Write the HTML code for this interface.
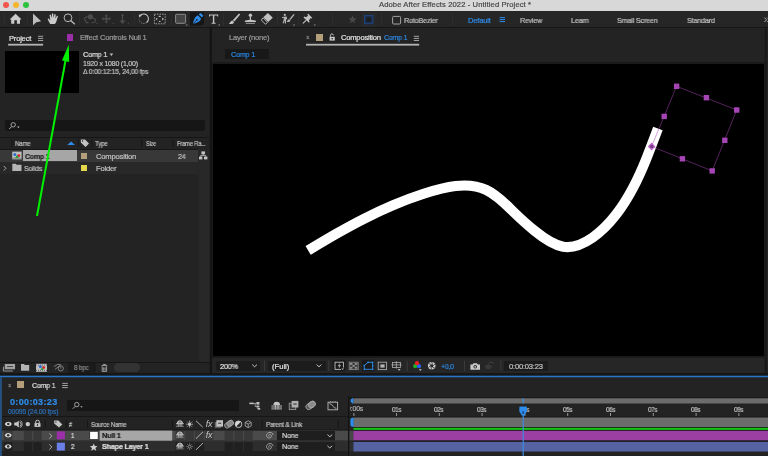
<!DOCTYPE html>
<html><head><meta charset="utf-8"><title>Adobe After Effects 2022 - Untitled Project *</title>
<style>
html,body{margin:0;padding:0;background:#161616;}
body{width:768px;height:456px;position:relative;overflow:hidden;font-family:"Liberation Sans",sans-serif;color:#b4b4b4;font-size:7.6px;}
.a{position:absolute;}
.t{position:absolute;white-space:pre;line-height:10px;height:10px;will-change:transform;-webkit-text-stroke:0.2px currentColor;}
svg{position:absolute;left:0;top:0;overflow:visible;}
</style></head><body>
<!-- ===== title bar ===== -->
<div class="a" style="left:0;top:0;width:768px;height:11px;background:#d8d8d8;"></div>
<div class="a" style="left:3px;top:2px;width:6px;height:6px;border-radius:50%;background:#f2554d;"></div>
<div class="a" style="left:13px;top:2px;width:6px;height:6px;border-radius:50%;background:#f6b52e;"></div>
<div class="a" style="left:23px;top:2px;width:6px;height:6px;border-radius:50%;background:#2bc23c;"></div>
<!-- ===== toolbar ===== -->
<div class="a" style="left:0;top:11px;width:768px;height:16px;background:#262626;"></div>
<!-- ===== project panel ===== -->
<div class="a" style="left:0;top:28px;width:210px;height:345px;background:#232323;"></div>
<div class="a" style="left:66.5px;top:34px;width:6.6px;height:6.6px;background:#9b2fa8;"></div>
<div class="a" style="left:5px;top:51px;width:74px;height:42px;background:#000;"></div>
<div class="a" style="left:5px;top:120px;width:200px;height:11px;background:#161616;border-radius:2px;"></div>
<div class="a" style="left:0;top:137px;width:209px;height:1px;background:#161616;"></div>
<div class="a" style="left:0;top:149px;width:198px;height:1px;background:#161616;"></div>
<div class="a" style="left:0;top:150px;width:198px;height:12px;background:#383838;"></div>
<div class="a" style="left:0;top:162px;width:198px;height:12px;background:#282828;"></div>
<div class="a" style="left:23px;top:150px;width:54px;height:11px;background:#a6a6a6;"></div>
<div class="a" style="left:81.2px;top:152.7px;width:6.3px;height:6.3px;background:#b39f7a;"></div>
<div class="a" style="left:81.2px;top:165.1px;width:6.3px;height:6.3px;background:#e4d84a;"></div>
<div class="a" style="left:0;top:362px;width:209px;height:1px;background:#161616;"></div>
<div class="a" style="left:68px;top:363px;width:28px;height:10px;background:#1b1b1b;"></div>
<div class="a" style="left:114px;top:363px;width:26px;height:9px;background:#333;border-radius:5px;"></div>
<!-- ===== comp panel ===== -->
<div class="a" style="left:212px;top:28px;width:556px;height:345px;background:#232323;"></div>
<div class="a" style="left:316px;top:34px;width:7px;height:7px;background:#b39f7a;"></div>
<div class="a" style="left:225px;top:49px;width:44px;height:10px;background:#181818;"></div>
<div class="a" style="left:212px;top:62px;width:554px;height:296px;background:#1a1a1a;"></div>
<div class="a" style="left:213px;top:64px;width:551px;height:292px;background:#000;"></div>
<!-- viewer footer -->
<div class="a" style="left:212px;top:358px;width:552px;height:15px;background:#262626;"></div>
<div class="a" style="left:216px;top:361px;width:44px;height:10px;background:#1c1c1c;"></div>
<div class="a" style="left:268px;top:361px;width:58px;height:10px;background:#1c1c1c;"></div>
<div class="a" style="left:504px;top:361px;width:44px;height:10px;background:#1c1c1c;"></div>
<!-- ===== timeline panel ===== -->
<div class="a" style="left:0;top:377px;width:768px;height:79px;background:#232323;"></div>
<div class="a" style="left:17px;top:381px;width:7px;height:7px;background:#b39f7a;"></div>
<div class="a" style="left:67px;top:400px;width:172px;height:11px;background:#161616;"></div>
<div class="a" style="left:2px;top:416px;width:347px;height:1px;background:#161616;"></div>
<!-- rows -->
<svg width="768" height="456" viewBox="0 0 768 456">
<rect x="1.9" y="429.4" width="346.2" height="1.2" fill="#1a1a1a"/>
<rect x="1.9" y="430.6" width="346.2" height="10" fill="#4a4a4a"/>
<rect x="1.9" y="440.6" width="346.2" height="1.2" fill="#363636"/>
<rect x="1.9" y="441.8" width="346.2" height="9.4" fill="#2d2d2d"/>
<rect x="1.9" y="451.2" width="346.2" height="4.8" fill="#202020"/>
<rect x="99.7" y="430.6" width="72.5" height="10.1" fill="#a6a6a6"/>
<rect x="56.8" y="431.4" width="8.1" height="7.9" fill="#9b2fa8"/>
<rect x="56.8" y="442.7" width="8.1" height="7.9" fill="#6b7fe8"/>
<rect x="89.6" y="431.3" width="8.7" height="8.3" fill="#262626"/>
<rect x="90.1" y="431.8" width="7.7" height="7.3" fill="#fff"/>
<rect x="277" y="431" width="58" height="9.4" fill="#1e1e1e"/>
<rect x="277" y="442.2" width="58" height="9" fill="#1e1e1e"/>
</svg>
<!-- time graph -->
<svg width="768" height="456" viewBox="0 0 768 456">
<rect x="349.2" y="430.8" width="4.4" height="9.7" fill="#484848"/>
<rect x="349.2" y="441.9" width="4.4" height="9.4" fill="#2e2e2e"/>
<rect x="348.1" y="396" width="1.1" height="60" fill="#111"/>
<rect x="349.2" y="397.3" width="418.8" height="1" fill="#161616"/>
<rect x="353.4" y="398.3" width="414.6" height="5.2" fill="#6c6c6c"/>
<rect x="349.2" y="416.6" width="418.8" height="1" fill="#141414"/>
<rect x="353.4" y="417.5" width="414.6" height="9.5" fill="#6c6c6c"/>
<rect x="353.4" y="427" width="414.6" height="3.8" fill="#161616"/>
<rect x="353.4" y="427.8" width="414.6" height="2.1" fill="#18c418"/>
<rect x="353.4" y="430.8" width="414.6" height="9.7" fill="#9c3fa3"/>
<rect x="353.4" y="440.5" width="414.6" height="1.4" fill="#1c1c1c"/>
<rect x="353.4" y="441.9" width="414.6" height="9.6" fill="#5563a2"/>
</svg>
<div class="a" style="left:349.5px;top:401px;width:13.5px;height:14px;overflow:hidden;"><div class="t" style="left:-3px;top:3.2px;font-size:6.8px;color:#b4b4b4;letter-spacing:-0.1px;">0:00s</div></div>
<div class="t" style="left:378.9px;top:-0.2px;font-size:7.6px;color:#464646;letter-spacing:0.11px;">Adobe After Effects 2022 - Untitled Project *</div>
<div class="t" style="left:403.6px;top:15.8px;font-size:7.6px;color:#c2c2c2;letter-spacing:-0.22px;transform:scaleX(0.952);transform-origin:0 50%;">RotoBezier</div>
<div class="t" style="left:468.0px;top:15.8px;font-size:7.6px;color:#2d8ceb;letter-spacing:-0.18px;">Default</div>
<div class="t" style="left:519.7px;top:15.8px;font-size:7.6px;color:#c2c2c2;letter-spacing:-0.22px;transform:scaleX(0.937);transform-origin:0 50%;">Review</div>
<div class="t" style="left:570.5px;top:15.8px;font-size:7.6px;color:#c2c2c2;letter-spacing:-0.22px;transform:scaleX(0.970);transform-origin:0 50%;">Learn</div>
<div class="t" style="left:617.2px;top:15.8px;font-size:7.6px;color:#c2c2c2;letter-spacing:-0.22px;transform:scaleX(0.954);transform-origin:0 50%;">Small Screen</div>
<div class="t" style="left:687.2px;top:15.8px;font-size:7.6px;color:#c2c2c2;letter-spacing:-0.22px;transform:scaleX(0.956);transform-origin:0 50%;">Standard</div>
<div class="t" style="left:8.5px;top:33.8px;font-size:7.6px;color:#e2e2e2;letter-spacing:-0.22px;">Project</div>
<div class="t" style="left:79.8px;top:32.8px;font-size:7.6px;color:#9a9a9a;letter-spacing:-0.21px;">Effect Controls Null 1</div>
<div class="t" style="left:82.5px;top:49.8px;font-size:7.6px;color:#e2e2e2;letter-spacing:-0.22px;transform:scaleX(0.961);transform-origin:0 50%;">Comp 1</div>
<div class="t" style="left:82.5px;top:58.8px;font-size:7px;color:#c2c2c2;letter-spacing:-0.22px;">1920 x 1080 (1,00)</div>
<div class="t" style="left:82.5px;top:66.8px;font-size:7px;color:#c2c2c2;letter-spacing:-0.22px;transform:scaleX(0.974);transform-origin:0 50%;">Δ 0:00:12:15, 24,00 fps</div>
<div class="t" style="left:229.0px;top:32.8px;font-size:7.6px;color:#9a9a9a;letter-spacing:-0.22px;">Layer (none)</div>
<div class="t" style="left:305.7px;top:32.8px;font-size:7.6px;color:#9a9a9a;letter-spacing:-0.22px;transform:scaleX(0.811);transform-origin:0 50%;">×</div>
<div class="t" style="left:341.0px;top:32.8px;font-size:7.6px;color:#e2e2e2;letter-spacing:-0.22px;">Composition</div>
<div class="t" style="left:383.5px;top:32.8px;font-size:7.6px;color:#2d8ceb;letter-spacing:-0.22px;transform:scaleX(0.922);transform-origin:0 50%;">Comp 1</div>
<div class="t" style="left:230.7px;top:49.8px;font-size:7.6px;color:#2d8ceb;letter-spacing:-0.22px;transform:scaleX(0.953);transform-origin:0 50%;">Comp 1</div>
<div class="t" style="left:14.9px;top:138.8px;font-size:7px;color:#c2c2c2;letter-spacing:-0.22px;transform:scaleX(0.876);transform-origin:0 50%;">Name</div>
<div class="t" style="left:95.1px;top:138.8px;font-size:7px;color:#c2c2c2;letter-spacing:-0.22px;transform:scaleX(0.888);transform-origin:0 50%;">Type</div>
<div class="t" style="left:145.6px;top:138.8px;font-size:7px;color:#c2c2c2;letter-spacing:-0.22px;transform:scaleX(0.787);transform-origin:0 50%;">Size</div>
<div class="t" style="left:176.9px;top:138.8px;font-size:7px;color:#c2c2c2;letter-spacing:-0.22px;transform:scaleX(0.829);transform-origin:0 50%;">Frame Ra...</div>
<div class="t" style="left:24.5px;top:151.8px;font-size:7.6px;color:#1c1c1c;letter-spacing:-0.22px;transform:scaleX(0.916);transform-origin:0 50%;font-weight:bold;">Comp 1</div>
<div class="t" style="left:95.9px;top:151.8px;font-size:7.6px;color:#c2c2c2;letter-spacing:-0.19px;">Composition</div>
<div class="t" style="left:177.6px;top:151.8px;font-size:7.6px;color:#c2c2c2;letter-spacing:-0.22px;transform:scaleX(0.935);transform-origin:0 50%;">24</div>
<div class="t" style="left:24.2px;top:163.8px;font-size:7.6px;color:#c2c2c2;letter-spacing:-0.22px;transform:scaleX(0.939);transform-origin:0 50%;">Solids</div>
<div class="t" style="left:95.9px;top:163.8px;font-size:7.6px;color:#c2c2c2;letter-spacing:-0.22px;">Folder</div>
<div class="t" style="left:74.2px;top:362.8px;font-size:6.6px;color:#8a8a8a;letter-spacing:-0.22px;transform:scaleX(0.963);transform-origin:0 50%;">8 bpc</div>
<div class="t" style="left:219.9px;top:361.8px;font-size:7.6px;color:#e2e2e2;letter-spacing:-0.22px;transform:scaleX(0.964);transform-origin:0 50%;">200%</div>
<div class="t" style="left:272.0px;top:361.8px;font-size:7.6px;color:#e2e2e2;letter-spacing:0.00px;">(Full)</div>
<div class="t" style="left:440.9px;top:361.8px;font-size:7.6px;color:#2d8ceb;letter-spacing:-0.22px;transform:scaleX(0.914);transform-origin:0 50%;">+0,0</div>
<div class="t" style="left:509.0px;top:361.8px;font-size:7.6px;color:#c2c2c2;letter-spacing:-0.22px;">0:00:03:23</div>
<div class="t" style="left:8.0px;top:380.8px;font-size:7.6px;color:#9a9a9a;letter-spacing:-0.22px;transform:scaleX(0.766);transform-origin:0 50%;">×</div>
<div class="t" style="left:31.9px;top:380.8px;font-size:7.6px;color:#e2e2e2;letter-spacing:-0.22px;transform:scaleX(0.930);transform-origin:0 50%;">Comp 1</div>
<div class="t" style="left:9.8px;top:397.2px;font-size:9px;color:#2d8ceb;letter-spacing:0.35px;font-weight:bold;">0:00:03:23</div>
<div class="t" style="left:8.1px;top:406.8px;font-size:6.8px;color:#2a6db5;letter-spacing:-0.18px;">00095 (24.00 fps)</div>
<div class="t" style="left:69.0px;top:419.8px;font-size:6.5px;color:#c2c2c2;letter-spacing:-0.22px;transform:scaleX(0.828);transform-origin:0 50%;">#</div>
<div class="t" style="left:91.2px;top:419.8px;font-size:7px;color:#c2c2c2;letter-spacing:-0.22px;transform:scaleX(0.878);transform-origin:0 50%;">Source Name</div>
<div class="t" style="left:265.8px;top:419.8px;font-size:7px;color:#c2c2c2;letter-spacing:-0.22px;transform:scaleX(0.920);transform-origin:0 50%;">Parent &amp; Link</div>
<div class="t" style="left:71.0px;top:430.8px;font-size:7.6px;color:#e2e2e2;letter-spacing:-0.22px;transform:scaleX(0.803);transform-origin:0 50%;">1</div>
<div class="t" style="left:71.0px;top:441.8px;font-size:7.6px;color:#e2e2e2;letter-spacing:-0.22px;transform:scaleX(0.850);transform-origin:0 50%;">2</div>
<div class="t" style="left:102.2px;top:430.8px;font-size:7.6px;color:#1c1c1c;letter-spacing:-0.22px;transform:scaleX(0.970);transform-origin:0 50%;font-weight:bold;">Null 1</div>
<div class="t" style="left:101.9px;top:441.8px;font-size:7.6px;color:#e2e2e2;letter-spacing:-0.22px;transform:scaleX(0.954);transform-origin:0 50%;font-weight:bold;">Shape Layer 1</div>
<div class="t" style="left:281.6px;top:430.8px;font-size:7.6px;color:#dcdcdc;letter-spacing:-0.22px;transform:scaleX(0.952);transform-origin:0 50%;">None</div>
<div class="t" style="left:281.6px;top:441.8px;font-size:7.6px;color:#dcdcdc;letter-spacing:-0.22px;transform:scaleX(0.952);transform-origin:0 50%;">None</div>
<div class="t" style="left:391.5px;top:404.8px;font-size:6.8px;color:#c2c2c2;letter-spacing:-0.22px;transform:scaleX(0.912);transform-origin:0 50%;">01s</div>
<div class="t" style="left:434.3px;top:404.8px;font-size:6.8px;color:#c2c2c2;letter-spacing:-0.22px;transform:scaleX(0.912);transform-origin:0 50%;">02s</div>
<div class="t" style="left:477.1px;top:404.8px;font-size:6.8px;color:#c2c2c2;letter-spacing:-0.22px;transform:scaleX(0.912);transform-origin:0 50%;">03s</div>
<div class="t" style="left:519.9px;top:404.8px;font-size:6.8px;color:#c2c2c2;letter-spacing:-0.22px;transform:scaleX(0.912);transform-origin:0 50%;">04s</div>
<div class="t" style="left:562.7px;top:404.8px;font-size:6.8px;color:#c2c2c2;letter-spacing:-0.22px;transform:scaleX(0.912);transform-origin:0 50%;">05s</div>
<div class="t" style="left:605.5px;top:404.8px;font-size:6.8px;color:#c2c2c2;letter-spacing:-0.22px;transform:scaleX(0.912);transform-origin:0 50%;">06s</div>
<div class="t" style="left:648.3px;top:404.8px;font-size:6.8px;color:#c2c2c2;letter-spacing:-0.22px;transform:scaleX(0.912);transform-origin:0 50%;">07s</div>
<div class="t" style="left:691.1px;top:404.8px;font-size:6.8px;color:#c2c2c2;letter-spacing:-0.22px;transform:scaleX(0.912);transform-origin:0 50%;">08s</div>
<div class="t" style="left:733.9px;top:404.8px;font-size:6.8px;color:#c2c2c2;letter-spacing:-0.22px;transform:scaleX(0.912);transform-origin:0 50%;">09s</div>
<svg width="768" height="456" viewBox="0 0 768 456">
<rect x="764.6" y="28.4" width="2.2" height="344.8" fill="#191919"/>
<!-- lock -->
<rect x="329.6" y="36.8" width="5.2" height="3.8" fill="#c8c8c8"/>
<path d="M330.4 36.8 v-1.4 a1.5 1.5 0 0 1 3 0" fill="none" stroke="#c8c8c8" stroke-width="0.9"/>
<rect x="331.6" y="38" width="1.2" height="1.4" fill="#232323"/>
<!-- comp tab menu -->
<path d="M413.8 36.3 h5.2 M413.8 38.4 h5.2 M413.8 40.5 h5.2" stroke="#b0b0b0" stroke-width="0.9"/>
<rect x="306" y="43.8" width="113.2" height="1.8" fill="#b4b4b4"/>
</svg>
<svg width="768" height="456" viewBox="0 0 768 456">
<path d="M264.5 360.5V371M328.7 360.5V371M407.2 360.5V371M464.5 360.5V371M500.8 360.5V371" stroke="#3a3a3a" stroke-width="1"/>
<!-- dropdown chevrons -->
<path d="M252.2 364.6 l2.4 2.2 l2.4 -2.2 M316.6 364.6 l2.4 2.2 l2.4 -2.2" fill="none" stroke="#c4c4c4" stroke-width="1"/>
<!-- fast preview -->
<rect x="332.6" y="359.8" width="13" height="11.5" fill="#1a1a1a"/>
<rect x="335" y="362.2" width="8.4" height="7.2" fill="none" stroke="#c0c0c0" stroke-width="0.9"/>
<path d="M340 362.8 L337.8 366.2 H339.4 L338.6 368.8 L341 365.2 H339.4 Z" fill="#c0c0c0"/>
<rect x="341" y="367.6" width="3.4" height="2.8" fill="#1a1a1a"/>
<path d="M341.4 368.4 h2.6 l-1.3 1.5 z" fill="#c0c0c0"/>
<!-- transparency grid -->
<rect x="349.2" y="362.2" width="9" height="7.4" fill="#3a3a3a" stroke="#8c8c8c" stroke-width="0.8"/>
<g fill="#8c8c8c"><rect x="350" y="363" width="2.4" height="1.9"/><rect x="354.8" y="363" width="2.4" height="1.9"/><rect x="352.4" y="364.9" width="2.4" height="1.9"/><rect x="350" y="366.8" width="2.4" height="1.9"/><rect x="354.8" y="366.8" width="2.4" height="1.9"/></g>
<!-- mask toggle -->
<rect x="362.1" y="359.8" width="12" height="11.5" fill="#1a1a1a"/>
<path d="M364.2 365.6 L368 362.3 L372.6 362.3 L372.6 369.3 L364.4 369.3 Z" fill="none" stroke="#2d8ceb" stroke-width="0.9"/>
<g fill="#2d8ceb"><rect x="363.5" y="364.8" width="1.5" height="1.5"/><rect x="367.3" y="361.6" width="1.5" height="1.5"/><rect x="371.9" y="361.6" width="1.5" height="1.5"/><rect x="371.9" y="365" width="1.5" height="1.5"/><rect x="371.9" y="368.6" width="1.5" height="1.5"/><rect x="363.6" y="368.6" width="1.5" height="1.5"/></g>
<!-- region of interest -->
<rect x="378.2" y="362.2" width="8.4" height="7.4" fill="none" stroke="#a8a8a8" stroke-width="0.9"/>
<rect x="380.4" y="364.4" width="4.2" height="3.2" fill="#b4b4b4"/>
<!-- grid & guides -->
<g fill="none" stroke="#b0b0b0" stroke-width="0.8"><rect x="392.4" y="362.4" width="8" height="5"/><path d="M396.4 361.2 V368.6 M391.4 364.9 H401.6"/></g>
<path d="M397.6 369 h3 l-1.5 1.7 z" fill="#c0c0c0"/>
<!-- RGB -->
<circle cx="415.2" cy="366.2" r="2.1" fill="#20b020"/>
<circle cx="419" cy="366.2" r="2.1" fill="#3060f0"/>
<circle cx="417" cy="363.2" r="2.1" fill="#f02020"/>
<path d="M418.8 369.2 h3 l-1.5 1.7 z" fill="#c0c0c0"/>
<!-- aperture -->
<circle cx="431.7" cy="365.8" r="3.8" fill="#c8c8c8"/>
<circle cx="431.7" cy="365.8" r="1.5" fill="#262626"/>
<path d="M431.7 362 L432.6 364.6 M435 364 L433 365.8 M434.8 368 L432.4 367.2 M431.7 369.6 L430.8 367 M428.4 367.6 L430.4 365.8 M428.6 363.6 L431 364.4" stroke="#262626" stroke-width="0.7"/>
<!-- camera -->
<path d="M470.4 364.4 h2.2 l0.8 -1.2 h3.6 l0.8 1.2 h2.2 v5.4 h-9.6 z" fill="#c8c8c8"/>
<circle cx="475.2" cy="366.8" r="1.8" fill="#262626"/><circle cx="475.2" cy="366.8" r="0.9" fill="#c8c8c8"/>
<!-- show snapshot (dim) -->
<g fill="none" stroke="#484848" stroke-width="0.9"><path d="M485 366.8 C486.6 364.6 490 364.6 491.6 366.8 C490 369 486.6 369 485 366.8 Z"/><circle cx="488.3" cy="366.8" r="1"/><path d="M488.6 363.4 C490 361.6 493 361.8 493.8 364"/></g>
</svg>
<svg width="768" height="456" viewBox="0 0 768 456">
<!-- project tab menu -->
<path d="M38 36.3 h5.2 M38 38.4 h5.2 M38 40.5 h5.2" stroke="#b0b0b0" stroke-width="0.9"/>
<rect x="8.1" y="43.8" width="35" height="1.8" fill="#b4b4b4"/>
<rect x="209.7" y="27" width="2.2" height="347" fill="#141414"/>
<rect x="198.4" y="149.7" width="11.3" height="212" fill="#282828"/>
<!-- comp name dropdown triangle -->
<path d="M109.6 53.6 h3.6 l-1.8 2.4 z" fill="#c0c0c0"/>
<!-- search icon -->
<circle cx="13.2" cy="124.8" r="2.2" fill="none" stroke="#b0b0b0" stroke-width="0.9"/>
<path d="M11.6 126.6 L9.2 129" stroke="#b0b0b0" stroke-width="1"/>
<path d="M17 126.6 h2.6 l-1.3 1.6 z" fill="#b0b0b0"/>
<!-- header separators -->
<path d="M11.9 139.5V147M78.5 139.5V147M91.9 139.5V147M141.6 139.5V147M173 139.5V147" stroke="#161616" stroke-width="1"/>
<!-- sort triangle -->
<path d="M67.2 145.1 L71.1 141.6 L75 145.1 Z" fill="#2d8ceb"/>
<!-- tag -->
<path d="M80.8 139.4 L85 139.4 L89 143.6 L85.6 146.9 L80.8 142.4 Z" fill="#c4c4c4"/>
<circle cx="82.5" cy="141" r="0.7" fill="#232323"/>
<!-- comp icon -->
<rect x="12" y="151.6" width="9.8" height="8" rx="0.8" fill="#c4c4c4" stroke="#555" stroke-width="0.6"/>
<path d="M12.2 158.2 h9.4" stroke="#6a6a6a" stroke-width="0.8"/>
<circle cx="14.8" cy="154.4" r="1.5" fill="#2a6bd6"/>
<circle cx="18.8" cy="155.4" r="1.5" fill="#d62a2a"/>
<path d="M15 158 L17 154.8 L19 158 Z" fill="#28a040"/>
<!-- folder icon -->
<path d="M12.3 163.8 h3.4 l0.9 1 h4.9 v6.1 h-9.2 z" fill="#b4b4b4"/>
<!-- chevron -->
<path d="M3.8 166 L5.9 168.3 L3.8 170.6" fill="none" stroke="#b0b0b0" stroke-width="0.9"/>
<!-- flowchart icon -->
<g fill="#c4c4c4"><rect x="201.4" y="151.4" width="3.6" height="2.8"/><rect x="199" y="156.6" width="3.4" height="2.8"/><rect x="204" y="156.6" width="3.4" height="2.8"/></g>
<path d="M203.2 154 V155.6 M200.7 156.8 V155.4 H205.7 V156.8" fill="none" stroke="#c4c4c4" stroke-width="0.8"/>
<!-- bottom bar icons -->
<g fill="none" stroke="#a8a8a8" stroke-width="0.9">
<rect x="5.2" y="364.4" width="9.4" height="4.4" fill="#a8a8a8"/>
<path d="M3.4 366.6 v4.4 h9.4"/>
</g>
<path d="M7 366.6 h6" stroke="#232323" stroke-width="0.8"/>
<path d="M21 364 h3 l0.8 0.9 h4.4 v5.8 h-8.2 z" fill="#b4b4b4"/>
<rect x="36" y="363.8" width="11" height="8" fill="#bdbdbd"/>
<path d="M36 370.4 h11 M36 365 h11" stroke="#555" stroke-width="0.8" stroke-dasharray="1 1"/>
<circle cx="40.4" cy="366.6" r="1.5" fill="#2a6bd6"/><circle cx="43.6" cy="367.6" r="1.5" fill="#d62a2a"/><path d="M40.4 370 L42 367.2 L43.6 370 Z" fill="#28a040"/>
<g fill="none" stroke="#8a8a8a" stroke-width="0.9"><circle cx="60.8" cy="368.4" r="2.6"/><path d="M60.8 366.6 v2"/><path d="M54 366.6 l4 -2.4 l3 0.8 M55 369.4 l5.4 -4.2"/></g>
<g fill="none" stroke="#a8a8a8" stroke-width="0.9"><path d="M101.6 365.6 h5.6 M103.4 365.4 v-1 h2 v1"/><path d="M102.2 366.4 v5 h4.4 v-5 M103.7 367.4 v3.2 M105.1 367.4 v3.2"/></g>
</svg>
<svg width="768" height="456" viewBox="0 0 768 456">

<!-- panel focus outline -->
<rect x="0" y="375.7" width="768" height="1.55" fill="#2b74cc"/>
<rect x="0" y="377.2" width="1.9" height="79" fill="#24507f"/>
<!-- tab menu -->
<path d="M62.2 383.4 h5.6 M62.2 385.5 h5.6 M62.2 387.6 h5.6" stroke="#b0b0b0" stroke-width="0.9"/>
<!-- search -->
<circle cx="76.8" cy="404.6" r="2.2" fill="none" stroke="#b0b0b0" stroke-width="0.9"/>
<path d="M75.2 406.4 L72.8 408.8" stroke="#b0b0b0" stroke-width="1"/>
<path d="M80.2 406.2 h2.6 l-1.3 1.6 z" fill="#b0b0b0"/>
<!-- top tools -->
<g fill="#c0c0c0"><rect x="249.4" y="402.6" width="4.4" height="1.6"/><rect x="256.4" y="402" width="3" height="2.6"/><rect x="256.4" y="405.6" width="3" height="1.8"/><rect x="258" y="408" width="2.2" height="1.7"/></g>
<path d="M253.8 403.4 H256.4 M255.2 403.4 V406.5 H256.4 M257.4 407.4 V408.8 H258" fill="none" stroke="#c0c0c0" stroke-width="0.7"/>
<path d="M271.4 405 h10.6 v4.4 h-10.6 z" fill="#6e6e6e"/>
<path d="M273.4 405 A3.3 3.3 0 0 1 280 405 Z" fill="#c4c4c4"/>
<path d="M275.4 404 V409.4 M278 404 V409.4" stroke="#c4c4c4" stroke-width="0.9"/>
<path d="M271.4 409 h10.6" stroke="#8a8a8a" stroke-width="0.8"/>
<rect x="289.2" y="403.2" width="6.6" height="6.4" fill="#3a3a3a" stroke="#a0a0a0" stroke-width="0.8"/>
<rect x="291.6" y="400.9" width="6.8" height="6.6" fill="#b0b0b0"/>
<path d="M293.4 404 h3.2" stroke="#2a2a2a" stroke-width="1"/>
<g transform="rotate(-35 310.6 405.4)"><rect x="305.4" y="402.6" width="10.4" height="5.6" rx="2.8" fill="#555" stroke="#a8a8a8" stroke-width="0.8"/><rect x="308.4" y="402.6" width="7.4" height="5.6" rx="2.8" fill="#8a8a8a" stroke="#b0b0b0" stroke-width="0.8"/></g>
<rect x="328" y="402.2" width="9.6" height="7.6" fill="none" stroke="#b8b8b8" stroke-width="0.9"/>
<path d="M329.4 403.6 C333 403.6 332.6 408.4 336.4 408.4" fill="none" stroke="#b8b8b8" stroke-width="0.9"/>
<path d="M330.4 402 v-1 M332.8 402 v-1 M335.2 402 v-1" stroke="#b8b8b8" stroke-width="0.7"/>
<!-- header: av switches -->
<g transform="translate(8.3,424)"><path d="M-3.5 0 C-1.8 -2.9 1.8 -2.9 3.5 0 C1.8 2.9 -1.8 2.9 -3.5 0 Z" fill="#dcdcdc"/><circle cx="0" cy="0" r="1.3" fill="#333"/></g>
<path d="M14.2 422.6 h2 l2.6 -1.9 v6.8 l-2.6 -1.9 h-2 z" fill="#c8c8c8"/>
<path d="M19.8 421.6 A3.6 3.6 0 0 1 19.8 426.8 M20.6 420.6 A4.8 4.8 0 0 1 20.6 427.6" fill="none" stroke="#c8c8c8" stroke-width="0.8"/>
<circle cx="27.8" cy="424.1" r="2.2" fill="#c8c8c8"/>
<rect x="34.5" y="423.1" width="6" height="3.8" fill="#c8c8c8"/>
<path d="M35.7 423.1 v-1.1 a1.8 1.8 0 0 1 3.6 0 v1.1" fill="none" stroke="#c8c8c8" stroke-width="1"/>
<rect x="36.9" y="424.2" width="1.2" height="1.6" fill="#232323"/>
<path d="M45.3 420V428M66.3 420V428M87.5 420V428M172.5 420V428M262.3 420V428M338.3 420V428" stroke="#161616" stroke-width="1"/>
<path d="M54.2 420.6 L58.4 420.6 L62.3 424.6 L59 427.6 L54.2 423.4 Z" fill="#c4c4c4"/>
<circle cx="55.9" cy="422.1" r="0.7" fill="#232323"/>
<!-- header: switches -->
<g transform="translate(179.9,423.4)"><path d="M-2.7 0.2 A2.7 2.9 0 0 1 2.7 0.2" fill="#5a5a5a" stroke="#d0d0d0" stroke-width="0.9"/><path d="M-3.9 0.3 H3.9" stroke="#d0d0d0" stroke-width="0.9"/><path d="M-1.1 -2 V2.8 M1.1 -2 V2.8" stroke="#d0d0d0" stroke-width="0.9"/><path d="M-3.9 3.1 H3.9 M-3.2 1.7 H3.2" stroke="#9a9a9a" stroke-width="0.7"/></g>
<g transform="translate(189.6,424.2)"><circle r="1.7" fill="#c4c4c4"/><path d="M0 -3.5V-2M0 3.5V2M-3.5 0H-2M3.5 0H2M-2.5 -2.5L-1.5 -1.5M2.5 2.5L1.5 1.5M-2.5 2.5L-1.5 1.5M2.5 -2.5L1.5 -1.5" stroke="#c4c4c4" stroke-width="0.8"/></g>
<path d="M196 420.8 L202.7 427.1" stroke="#c4c4c4" stroke-width="0.9"/>
<g transform="translate(205.8,427.2)"><text x="0" y="0" font-family="Liberation Sans, sans-serif" font-style="italic" font-size="9" fill="#c8c8c8" letter-spacing="-0.3">fx</text></g>
<rect x="214.8" y="422" width="6.4" height="5.8" fill="#6a6a6a"/>
<rect x="216.4" y="420.2" width="6.6" height="6.4" fill="#c0c0c0"/>
<path d="M218.2 423.2 h3" stroke="#2a2a2a" stroke-width="1"/>
<g transform="rotate(-35 229 424.2)"><rect x="224.2" y="421.6" width="9.6" height="5.2" rx="2.6" fill="#555" stroke="#a0a0a0" stroke-width="0.8"/><rect x="227" y="421.6" width="6.8" height="5.2" rx="2.6" fill="#8a8a8a" stroke="#a8a8a8" stroke-width="0.8"/></g>
<circle cx="238.5" cy="424.2" r="3.3" fill="#d8d8d8"/>
<path d="M240.83 421.87 A3.3 3.3 0 0 1 236.17 426.53 Z" fill="#262626"/>
<circle cx="238.5" cy="424.2" r="3.3" fill="none" stroke="#d8d8d8" stroke-width="0.7"/>
<g fill="none" stroke="#c4c4c4" stroke-width="0.7"><path d="M248.2 420.8 L251.2 422.4 V426 L248.2 427.6 L245.2 426 V422.4 Z M245.2 422.4 L248.2 424 L251.2 422.4 M248.2 424 V427.6"/></g>
<!-- row cells -->
<g fill="#383838">
<rect x="3.8" y="431" width="8.7" height="9.2"/><rect x="23.8" y="431" width="8.3" height="9.2"/><rect x="33.4" y="431" width="8.3" height="9.2"/>
<rect x="175.5" y="431" width="8.8" height="9.2"/><rect x="185.3" y="431" width="8.8" height="9.2"/><rect x="195" y="431" width="8.8" height="9.2"/><rect x="204.7" y="431" width="8.7" height="9.2"/>
<rect x="224.6" y="431" width="8.7" height="9.2"/><rect x="234.3" y="431" width="8.7" height="9.2"/><rect x="244" y="431" width="8.7" height="9.2"/>
</g>
<g fill="#202020">
<rect x="3.8" y="442.2" width="8.7" height="8.8"/><rect x="23.8" y="442.2" width="8.3" height="8.8"/><rect x="33.4" y="442.2" width="8.3" height="8.8"/>
<rect x="175.5" y="442.2" width="8.8" height="8.8"/><rect x="185.3" y="442.2" width="8.8" height="8.8"/><rect x="195" y="442.2" width="8.8" height="8.8"/>
<rect x="224.6" y="442.2" width="8.7" height="8.8"/><rect x="234.3" y="442.2" width="8.7" height="8.8"/><rect x="244" y="442.2" width="8.7" height="8.8"/>
</g>
<g transform="translate(8.2,435.2)"><path d="M-3.5 0 C-1.8 -2.9 1.8 -2.9 3.5 0 C1.8 2.9 -1.8 2.9 -3.5 0 Z" fill="#dcdcdc"/><circle cx="0" cy="0" r="1.3" fill="#333"/></g><g transform="translate(8.2,446.4)"><path d="M-3.5 0 C-1.8 -2.9 1.8 -2.9 3.5 0 C1.8 2.9 -1.8 2.9 -3.5 0 Z" fill="#dcdcdc"/><circle cx="0" cy="0" r="1.3" fill="#333"/></g>
<path d="M49.4 433.4 L51.8 436 L49.4 438.6 M49.4 444.4 L51.8 447 L49.4 449.6" fill="none" stroke="#b4b4b4" stroke-width="0.9"/>
<g transform="translate(179.9,434.6)"><path d="M-2.7 0.2 A2.7 2.9 0 0 1 2.7 0.2" fill="#5a5a5a" stroke="#d0d0d0" stroke-width="0.9"/><path d="M-3.9 0.3 H3.9" stroke="#d0d0d0" stroke-width="0.9"/><path d="M-1.1 -2 V2.8 M1.1 -2 V2.8" stroke="#d0d0d0" stroke-width="0.9"/><path d="M-3.9 3.1 H3.9 M-3.2 1.7 H3.2" stroke="#9a9a9a" stroke-width="0.7"/></g><g transform="translate(179.9,445.8)"><path d="M-2.7 0.2 A2.7 2.9 0 0 1 2.7 0.2" fill="#5a5a5a" stroke="#d0d0d0" stroke-width="0.9"/><path d="M-3.9 0.3 H3.9" stroke="#d0d0d0" stroke-width="0.9"/><path d="M-1.1 -2 V2.8 M1.1 -2 V2.8" stroke="#d0d0d0" stroke-width="0.9"/><path d="M-3.9 3.1 H3.9 M-3.2 1.7 H3.2" stroke="#9a9a9a" stroke-width="0.7"/></g>
<g transform="translate(189.6,446.6)"><circle r="1.4" fill="none" stroke="#b0b0b0" stroke-width="0.7"/><path d="M0 -3.3V-2M0 3.3V2M-3.3 0H-2M3.3 0H2M-2.3 -2.3L-1.5 -1.5M2.3 2.3L1.5 1.5M-2.3 2.3L-1.5 1.5M2.3 -2.3L1.5 -1.5" stroke="#b0b0b0" stroke-width="0.6"/></g>
<path d="M196 438.6 L203 431.8 M196 449.8 L203 443" stroke="#c4c4c4" stroke-width="0.9"/>
<g transform="translate(205.8,438.3)"><text x="0" y="0" font-family="Liberation Sans, sans-serif" font-style="italic" font-size="9" fill="#c8c8c8" letter-spacing="-0.3">fx</text></g>
<g transform="translate(269,436)"><path d="M0.2 0.6 C-1.2 -0.6 0.4 -2.4 1.8 -1.2 C3.4 0.2 1.4 3 -1 1.8 C-3.6 0.4 -2.6 -3.6 1 -3.6 C3 -3.6 4 -2.4 4 -1" fill="none" stroke="#b8b8b8" stroke-width="0.8"/></g><g transform="translate(269,447.2)"><path d="M0.2 0.6 C-1.2 -0.6 0.4 -2.4 1.8 -1.2 C3.4 0.2 1.4 3 -1 1.8 C-3.6 0.4 -2.6 -3.6 1 -3.6 C3 -3.6 4 -2.4 4 -1" fill="none" stroke="#b8b8b8" stroke-width="0.8"/></g>
<path d="M327.4 434.6 l2.4 2.2 l2.4 -2.2 M327.4 445.8 l2.4 2.2 l2.4 -2.2" fill="none" stroke="#c4c4c4" stroke-width="1"/>
<!-- star -->
<path d="M93.7 443.4 l1.1 2.6 l2.8 0.2 l-2.2 1.8 l0.8 2.8 l-2.5 -1.6 l-2.5 1.6 l0.8 -2.8 l-2.2 -1.8 l2.8 -0.2 z" fill="#d0d0d0"/>
<!-- time graph -->
<path d="M353.4 398.2 h-1 a3 2.8 0 0 0 0 5.2 h1 z" fill="#2d8ceb"/>
<path d="M353.6 417.8 h-1.2 a2.2 2.2 0 0 0 -2 2 v5 a2.2 2.2 0 0 0 2 2 h1.2 z" fill="#2d8ceb"/>
<g stroke="#b4b4b4" stroke-width="0.8"><path d="M353.9 413V416M396.5 413V416M439.3 413V416M482.1 413V416M524.9 413V416M567.7 413V416M610.5 413V416M653.3 413V416M696.1 413V416M738.9 413V416"/></g>
<!-- playhead -->
<path d="M519.9 406.6 h6.2 q0.8 0 0.8 0.8 v3.8 l-2.6 4.6 h-2.4 l-2.6 -4.6 v-3.8 q0 -0.8 0.8 -0.8 z" fill="#2d8ceb"/>
<path d="M522.2 411.4 h1.8 l-0.4 2.6 h-1 z" fill="#1b3f6b"/>
</svg>
<svg width="768" height="456" viewBox="0 0 768 456">
<!-- toolbar separators -->
<g stroke="#2d2d2d" stroke-width="1">
<path d="M27.5 13V25M79.5 13V25M134.5 13V25M171.5 13V25M223.5 13V25M277.5 13V25M298.5 13V25M332.5 13V25M381.5 13V25M452.5 13V25"/>
</g>
<path d="M4.3 13.5V25" stroke="#3a3a3a" stroke-width="1.2" stroke-dasharray="1 1.2"/>
<!-- home -->
<path d="M15.6 13.7 L21.6 19.6 L20 19.6 L20 23.7 L16.9 23.7 L16.9 20.3 L14.3 20.3 L14.3 23.7 L11.2 23.7 L11.2 19.6 L9.6 19.6 Z" fill="#cacaca"/>
<!-- selection arrow -->
<path d="M33 13.6 L33 25.2 L36.3 22.2 L41.2 21.3 Z" fill="#bcbcbc"/>
<!-- hand -->
<path d="M50.2 24 C49.2 22.5 48.3 20.6 47.7 19.3 C47.5 18.6 48.4 18.2 48.9 18.8 L50.3 20.4 L49.6 15.2 C49.5 14.3 50.7 14.1 50.9 15 L51.7 18.2 L51.9 14 C51.9 13.1 53.2 13.1 53.3 14 L53.6 18.1 L54.4 14.4 C54.6 13.6 55.8 13.8 55.7 14.7 L55.4 18.6 L56.8 16 C57.2 15.3 58.2 15.8 57.9 16.6 C57.2 18.8 56.8 20.4 56.2 22 C55.9 22.9 55.3 23.6 54.6 24 Z" fill="#cacaca"/>
<!-- zoom -->
<circle cx="68" cy="17.8" r="3.9" fill="none" stroke="#b8b8b8" stroke-width="1"/>
<path d="M70.9 20.7 L74.4 23.8" stroke="#b8b8b8" stroke-width="1.4" stroke-linecap="round"/>
<!-- orbit (dim) -->
<g fill="#4c4c4c" stroke="none">
<circle cx="90.4" cy="16.8" r="2.6"/>
<path d="M85.2 21.2 L89.5 22.6 L86.2 23.6 Z"/>
<path d="M96 24.1 l1.6 0 l0 -1.6 z M112.3 24.1 l1.6 0 l0 -1.6 z M127.2 24.1 l1.6 0 l0 -1.6 z"/>
</g>
<path d="M87.6 16.6 C84.2 16.8 83.6 19.6 86.2 21.6 M91.5 22.8 C95 22.9 96.4 21 95.2 19.4 C94.6 18.6 93.8 18.2 93 18" fill="none" stroke="#4c4c4c" stroke-width="1.1"/>
<!-- pan (dim) -->
<g fill="#4c4c4c"><path d="M106.3 14 l1.7 2.2 h-1.1 v2 h2 v-1.1 l2.2 1.7 l-2.2 1.7 v-1.1 h-2 v2 h1.1 l-1.7 2.2 l-1.7 -2.2 h1.1 v-2 h-2 v1.1 l-2.2 -1.7 l2.2 -1.7 v1.1 h2 v-2 h-1.1 z"/>
<circle cx="106.3" cy="18.8" r="1.5"/>
<!-- dolly (dim) -->
<path d="M122.5 13.8 l1.7 2 h-1.1 v4.6 h2.4 l-3 3.6 l-3 -3.6 h2.4 v-4.6 h-1.1 z"/></g>
<!-- rotate -->
<path d="M140.6 15.2 A4.7 4.7 0 1 1 146.5 22.5" fill="none" stroke="#c2c2c2" stroke-width="1.1"/>
<path d="M146.5 22.5 A4.7 4.7 0 0 1 139 19.5" fill="none" stroke="#8a8a8a" stroke-width="1" stroke-dasharray="1.2 1"/>
<path d="M138.8 14.6 L141.9 14.9 L139.3 17.8 Z" fill="#c2c2c2"/>
<!-- pan-behind / anchor -->
<g fill="#c2c2c2">
<rect x="154.4" y="14.2" width="10.8" height="9.6" fill="none" stroke="#b4b4b4" stroke-width="0.9" stroke-dasharray="1.4 1.2"/>
<path d="M159.7 15.6 l1.5 1.5 h-3 z M159.7 22.3 l1.5 -1.5 h-3 z M155.5 18.9 l1.8 -1.5 v3 z M164 18.9 l-1.8 -1.5 v3 z"/>
</g>
<rect x="157.6" y="17" width="4.2" height="3.8" fill="#262626"/>
<!-- rectangle tool -->
<rect x="175.6" y="14.3" width="10" height="9" rx="0.8" fill="#444" stroke="#8c8c8c" stroke-width="1"/>
<g fill="#9a9a9a"><path d="M185.6 25.4 l1.7 0 l0 -1.7 z M201.8 25.4 l1.7 0 l0 -1.7 z M218 25.4 l1.7 0 l0 -1.7 z M292.8 25.4 l1.7 0 l0 -1.7 z M313.6 25.4 l1.7 0 l0 -1.7 z"/></g>
<!-- pen tool (selected) -->
<rect x="190" y="12.4" width="14" height="13.2" fill="#161616"/>
<g fill="#2d8ceb">
<path d="M198.6 14.2 L200.8 12.9 L203.4 15.8 L201.9 17.6 Z"/>
<path d="M197.8 15.2 L201 18.6 C200.6 21 198.8 22.4 193 24 C193.4 20.6 194.6 16.8 197.8 15.2 Z"/>
</g>
<path d="M193.2 23.8 L196.6 20.2" stroke="#161616" stroke-width="0.7"/>
<circle cx="196.9" cy="19.9" r="0.8" fill="#161616"/>
<!-- T -->
<path d="M209 14.4 H218.2 V16.6 H217.4 L217 15.4 H214.3 V22.6 L215.6 22.9 V23.7 H211.6 V22.9 L212.9 22.6 V15.4 H210.2 L209.8 16.6 H209 Z" fill="#c2c2c2"/>
<!-- brush -->
<path d="M239 13.6 L240.2 14.5 L234.4 21.4 L232.8 20.2 Z" fill="#c2c2c2"/>
<path d="M232.4 20.6 L234 21.9 C234 23.6 231.6 24.4 228.8 24 C230.2 23.2 230.2 21 232.4 20.6 Z" fill="#c2c2c2"/>
<!-- stamp -->
<g fill="#c2c2c2"><circle cx="250.4" cy="15.3" r="1.7"/><path d="M249.8 16.5 h1.2 v3.2 c2 .2 4.4 .4 5 1.4 v0.9 h-11.2 v-0.9 c.6 -1 3 -1.2 5 -1.4 z"/></g>
<rect x="245.8" y="22.8" width="9.2" height="1.1" fill="#909090"/>
<!-- eraser -->
<path d="M267.9 13.1 L272.8 17.8 L268.2 22 L263.3 17.3 Z" fill="#c2c2c2"/>
<path d="M263 17.8 L267.6 22.4 L265.4 24.2 L261.3 20 Z" fill="none" stroke="#c2c2c2" stroke-width="0.9"/>
<!-- roto brush -->
<g fill="#b4b4b4"><circle cx="284.8" cy="14.9" r="1.1"/>
<path d="M282 17 L286.6 16.6 L287.2 19 L286 19.4 L286 23.4 L284.9 23.4 L284.6 20.6 L283.6 23.5 L282.6 23.2 L283.8 19.6 L283.8 17.8 L282.1 18 Z"/>
<path d="M293.6 14 L294.6 14.8 L290.6 19.8 L289.4 18.9 Z"/>
<path d="M289 19.2 L290.4 20.2 C290.4 21.8 288.4 22.4 286.4 22 C287.4 21.4 287.4 19.6 289 19.2 Z"/></g>
<!-- pin -->
<g fill="#c2c2c2"><path d="M308 13.6 L312.4 18 L311.4 18.6 L310.4 18.2 L309 20.2 L309.6 22.2 L308.6 22.6 L303.6 17.6 L304.2 16.6 L306 17.2 L308 15.8 L307.4 14.6 Z"/></g>
<path d="M306 20.4 L303.2 23.2" stroke="#c2c2c2" stroke-width="1.1" stroke-linecap="round"/>
<!-- star (dim) -->
<path d="M352.6 15.3 l1.1 2.9 l3 0.1 l-2.4 1.9 l0.9 3 l-2.6 -1.7 l-2.6 1.7 l0.9 -3 l-2.4 -1.9 l3 -0.1 z" fill="#484848"/>
<!-- blue dotted square -->
<rect x="362.4" y="13.2" width="12.6" height="12.6" fill="none" stroke="#2f2f2f" stroke-width="0.8"/>
<rect x="364" y="15" width="9.4" height="9.2" fill="#1b3050"/>
<rect x="364.5" y="15.5" width="8.4" height="8.2" fill="none" stroke="#2258a6" stroke-width="1" stroke-dasharray="1 1"/>
<circle cx="368.7" cy="19.6" r="2.7" fill="#1c1e22"/>
<!-- checkbox -->
<rect x="392.6" y="16.4" width="8" height="7.6" rx="1" fill="none" stroke="#a4a4a4" stroke-width="1"/>
<!-- default menu -->
<path d="M499.6 17.6 h5.4 M499.6 19.6 h5.4 M499.6 21.6 h5.4" stroke="#2d8ceb" stroke-width="1"/>
<!-- chevrons -->
<path d="M764.4 17.6 l2.2 2.2 l-2.2 2.2 M767.2 17.6 l2.2 2.2 l-2.2 2.2" fill="none" stroke="#b4b4b4" stroke-width="1"/>
</svg>

<!-- viewer art -->
<svg width="768" height="456" viewBox="0 0 768 456">
<path d="M308.1 250.4 C317.5 244.8 326.7 239.3 336.1 233.9 C345.4 228.6 354.7 223.5 364.2 218.7 C373.7 213.8 383.3 209.3 393.2 205.1 C403.0 200.9 413.1 197.1 423.6 193.7 C434.0 190.4 444.9 187.2 455.5 186.0 C466.2 184.8 476.6 185.4 486.1 189.9 C495.5 194.3 504.0 202.4 511.8 210.2 C519.7 217.9 526.7 224.4 534.9 231.0 C543.1 237.7 552.8 244.7 563.1 246.7 C573.5 248.6 583.7 243.7 592.6 237.6 C601.4 231.4 609.0 223.7 615.6 215.2 C622.3 206.7 628.0 197.4 633.0 187.9 C638.0 178.4 642.3 168.7 646.3 158.8 C650.3 148.9 654.1 138.8 657.9 128.6" fill="none" stroke="#fff" stroke-width="10.1"/>
<g stroke="#a544b4" stroke-opacity="0.5" stroke-width="1" fill="none"><path d="M676.6 86.3 L736.7 110 L712.2 170.9 L651.6 146.4 Z"/></g>
<g fill="#a544b4">
<rect x="673.9" y="83.6" width="5.4" height="5.4"/>
<rect x="703.7" y="95" width="5.4" height="5.4"/>
<rect x="734" y="107.3" width="5.4" height="5.4"/>
<rect x="661.5" y="113.7" width="5.4" height="5.4"/>
<rect x="722.1" y="137.6" width="5.4" height="5.4"/>
<rect x="679.7" y="156.1" width="5.4" height="5.4"/>
<rect x="709.5" y="168.2" width="5.4" height="5.4"/>
</g>
<path d="M651.6 142.4 L655.4 146.4 L651.6 150.4 L647.8 146.4 Z" fill="#a544b4" opacity="0.8"/>
<circle cx="651.6" cy="146.4" r="1.6" fill="#7e3a8c"/>
<!-- green arrow -->
<path d="M37 216 L65.6 60" stroke="#00f000" stroke-width="2" fill="none"/>
<path d="M68.8 44.4 L62 60.6 L69.2 62 Z" fill="#00f000"/>
<path d="M523.2 398.3 V403.5 M523.2 415.5 V456" stroke="#3b8be0" stroke-width="1.2" fill="none"/>
</svg>
</body></html>
